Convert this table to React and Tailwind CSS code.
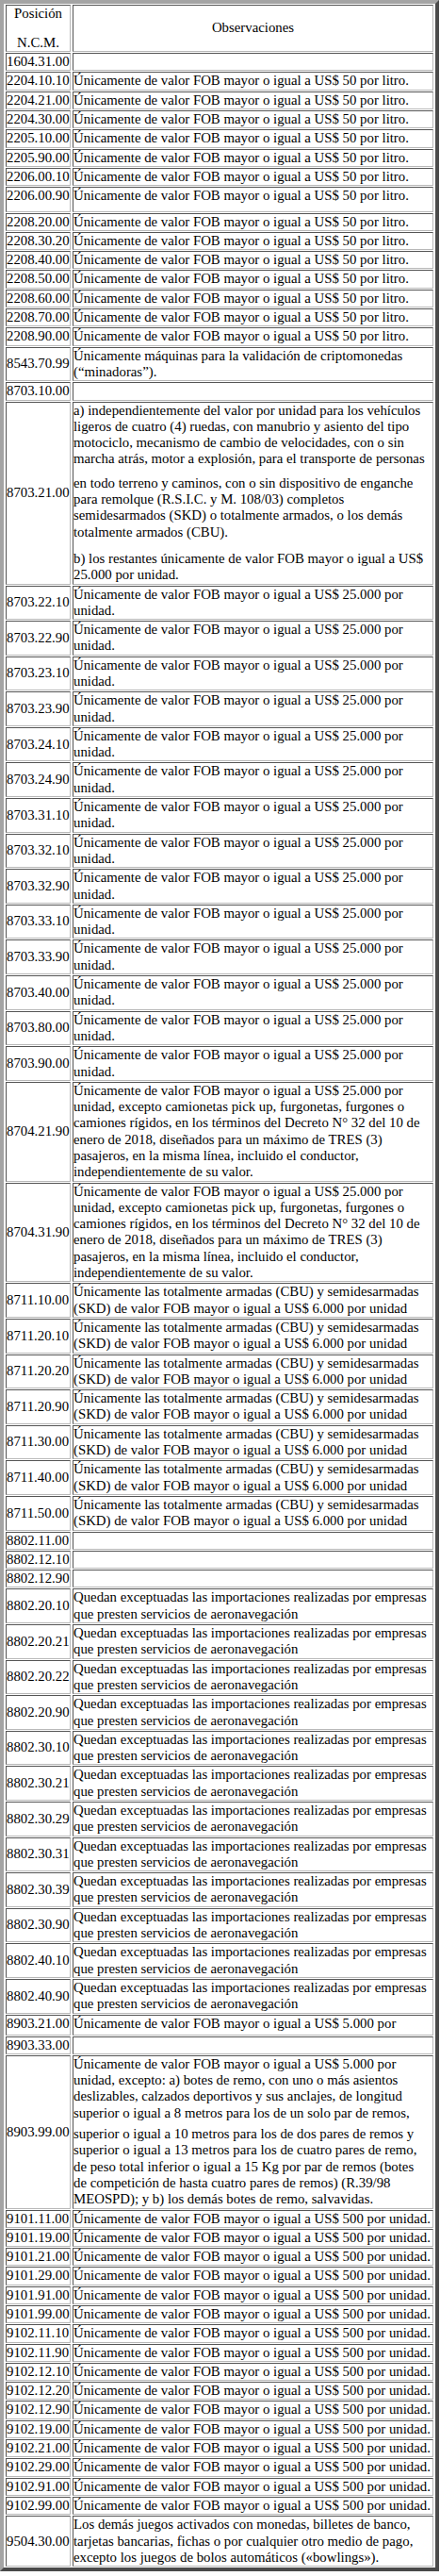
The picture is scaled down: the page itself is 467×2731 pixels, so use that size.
import React from 'react';

const FOB50 = ['Únicamente de valor FOB mayor o igual a US$ 50 por litro.'];
const FOB25K = ['Únicamente de valor FOB mayor o igual a US$ 25.000 por', 'unidad.'];
const FOB500 = ['Únicamente de valor FOB mayor o igual a US$ 500 por unidad.'];
const MOTOS = [
  'Únicamente las totalmente armadas (CBU) y semidesarmadas',
  '(SKD) de valor FOB mayor o igual a US$ 6.000 por unidad',
];
const AERO = [
  'Quedan exceptuadas las importaciones realizadas por empresas',
  'que presten servicios de aeronavegación',
];
const CAMIONETAS = [
  'Únicamente de valor FOB mayor o igual a US$ 25.000 por',
  'unidad, excepto camionetas pick up, furgonetas, furgones o',
  'camiones rígidos, en los términos del Decreto N° 32 del 10 de',
  'enero de 2018, diseñados para un máximo de TRES (3)',
  'pasajeros, en la misma línea, incluido el conductor,',
  'independientemente de su valor.',
];

// [posicion, parrafos (lineas), padding extra de la fila]
// una linea puede ser { t, cls } cuando lleva un margen propio
const rows = [
  ['1604.31.00', []],
  ['2204.10.10', [FOB50]],
  ['2204.21.00', [FOB50]],
  ['2204.30.00', [FOB50]],
  ['2205.10.00', [FOB50]],
  ['2205.90.00', [FOB50]],
  ['2206.00.10', [FOB50]],
  ['2206.00.90', [FOB50], 'pb-[7px]'],
  ['2208.20.00', [FOB50]],
  ['2208.30.20', [FOB50]],
  ['2208.40.00', [FOB50]],
  ['2208.50.00', [FOB50]],
  ['2208.60.00', [FOB50]],
  ['2208.70.00', [FOB50]],
  ['2208.90.00', [FOB50]],
  ['8543.70.99', [['Únicamente máquinas para la validación de criptomonedas', '(“minadoras”).']]],
  ['8703.10.00', []],
  ['8703.21.00', [
    [
      'a) independientemente del valor por unidad para los vehículos',
      'ligeros de cuatro (4) ruedas, con manubrio y asiento del tipo',
      'motociclo, mecanismo de cambio de velocidades, con o sin',
      'marcha atrás, motor a explosión, para el transporte de personas',
      { t: 'en todo terreno y caminos, con o sin dispositivo de enganche', cls: 'mt-[8px]' },
      'para remolque (R.S.I.C. y M. 108/03) completos',
      'semidesarmados (SKD) o totalmente armados, o los demás',
      'totalmente armados (CBU).',
    ],
    ['b) los restantes únicamente de valor FOB mayor o igual a US$', '25.000 por unidad.'],
  ]],
  ['8703.22.10', [FOB25K]],
  ['8703.22.90', [FOB25K]],
  ['8703.23.10', [FOB25K]],
  ['8703.23.90', [FOB25K]],
  ['8703.24.10', [FOB25K]],
  ['8703.24.90', [FOB25K]],
  ['8703.31.10', [FOB25K]],
  ['8703.32.10', [FOB25K]],
  ['8703.32.90', [FOB25K]],
  ['8703.33.10', [FOB25K]],
  ['8703.33.90', [FOB25K]],
  ['8703.40.00', [FOB25K]],
  ['8703.80.00', [FOB25K]],
  ['8703.90.00', [FOB25K]],
  ['8704.21.90', [CAMIONETAS]],
  ['8704.31.90', [CAMIONETAS]],
  ['8711.10.00', [MOTOS]],
  ['8711.20.10', [MOTOS]],
  ['8711.20.20', [MOTOS]],
  ['8711.20.90', [MOTOS]],
  ['8711.30.00', [MOTOS]],
  ['8711.40.00', [MOTOS]],
  ['8711.50.00', [MOTOS]],
  ['8802.11.00', []],
  ['8802.12.10', []],
  ['8802.12.90', []],
  ['8802.20.10', [AERO]],
  ['8802.20.21', [AERO]],
  ['8802.20.22', [AERO]],
  ['8802.20.90', [AERO]],
  ['8802.30.10', [AERO]],
  ['8802.30.21', [AERO]],
  ['8802.30.29', [AERO]],
  ['8802.30.31', [AERO]],
  ['8802.30.39', [AERO]],
  ['8802.30.90', [AERO]],
  ['8802.40.10', [AERO]],
  ['8802.40.90', [AERO]],
  ['8903.21.00', [['Únicamente de valor FOB mayor o igual a US$ 5.000 por']], 'pb-[2.7px]'],
  ['8903.33.00', []],
  ['8903.99.00', [[
    'Únicamente de valor FOB mayor o igual a US$ 5.000 por',
    'unidad, excepto: a) botes de remo, con uno o más asientos',
    'deslizables, calzados deportivos y sus anclajes, de longitud',
    'superior o igual a 8 metros para los de un solo par de remos,',
    { t: 'superior o igual a 10 metros para los de dos pares de remos y', cls: 'mt-[5px]' },
    'superior o igual a 13 metros para los de cuatro pares de remo,',
    'de peso total inferior o igual a 15 Kg por par de remos (botes',
    'de competición de hasta cuatro pares de remos) (R.39/98',
    'MEOSPD); y b) los demás botes de remo, salvavidas.',
  ]]],
  ['9101.11.00', [FOB500]],
  ['9101.19.00', [FOB500]],
  ['9101.21.00', [FOB500]],
  ['9101.29.00', [FOB500]],
  ['9101.91.00', [FOB500]],
  ['9101.99.00', [FOB500]],
  ['9102.11.10', [FOB500]],
  ['9102.11.90', [FOB500]],
  ['9102.12.10', [FOB500]],
  ['9102.12.20', [FOB500]],
  ['9102.12.90', [FOB500]],
  ['9102.19.00', [FOB500]],
  ['9102.21.00', [FOB500]],
  ['9102.29.00', [FOB500]],
  ['9102.91.00', [FOB500]],
  ['9102.99.00', [FOB500]],
  ['9504.30.00', [[
    'Los demás juegos activados con monedas, billetes de banco,',
    'tarjetas bancarias, fichas o por cualquier otro medio de pago,',
    'excepto los juegos de bolos automáticos («bowlings»).',
  ]]],
];

const cell = 'border border-t-[#555555] border-l-[#555555] border-r-[#b8b8b8] border-b-[#b8b8b8] p-0 align-middle';

export default function App() {
  return (
    <div className="bg-white min-h-screen">
      <table className="w-[466px] table-fixed border-separate border-spacing-x-[2px] border-spacing-y-[1px] border-4 border-t-[#a4a4a4] border-l-[#a4a4a4] border-r-[#4a4a4a] border-b-[#4a4a4a] bg-white font-['Liberation_Serif',serif] text-[14.8px] leading-[17.3px] text-black">
        <thead>
          <tr>
            <th className={`${cell} w-[69px] font-normal text-center`}>
              <div>Posición</div>
              <div className="mt-[13.6px]">N.C.M.</div>
            </th>
            <th className={`${cell} font-normal text-center`}>Observaciones</th>
          </tr>
        </thead>
        <tbody>
          {rows.map(([pos, paras, pad = '']) => (
            <tr key={pos}>
              <td className={`${cell} ${pad} whitespace-nowrap text-left`}>{pos}</td>
              <td className={`${cell} ${pad} whitespace-nowrap text-left`}>
                {paras.length === 0 ? <div className="h-[17.3px]" /> : paras.map((lines, i) => (
                  <div key={i} className={i > 0 ? 'mt-[11px]' : ''}>
                    {lines.map((l, j) =>
                      typeof l === 'string' ? <div key={j}>{l}</div> : <div key={j} className={l.cls}>{l.t}</div>
                    )}
                  </div>
                ))}
              </td>
            </tr>
          ))}
        </tbody>
      </table>
    </div>
  );
}
